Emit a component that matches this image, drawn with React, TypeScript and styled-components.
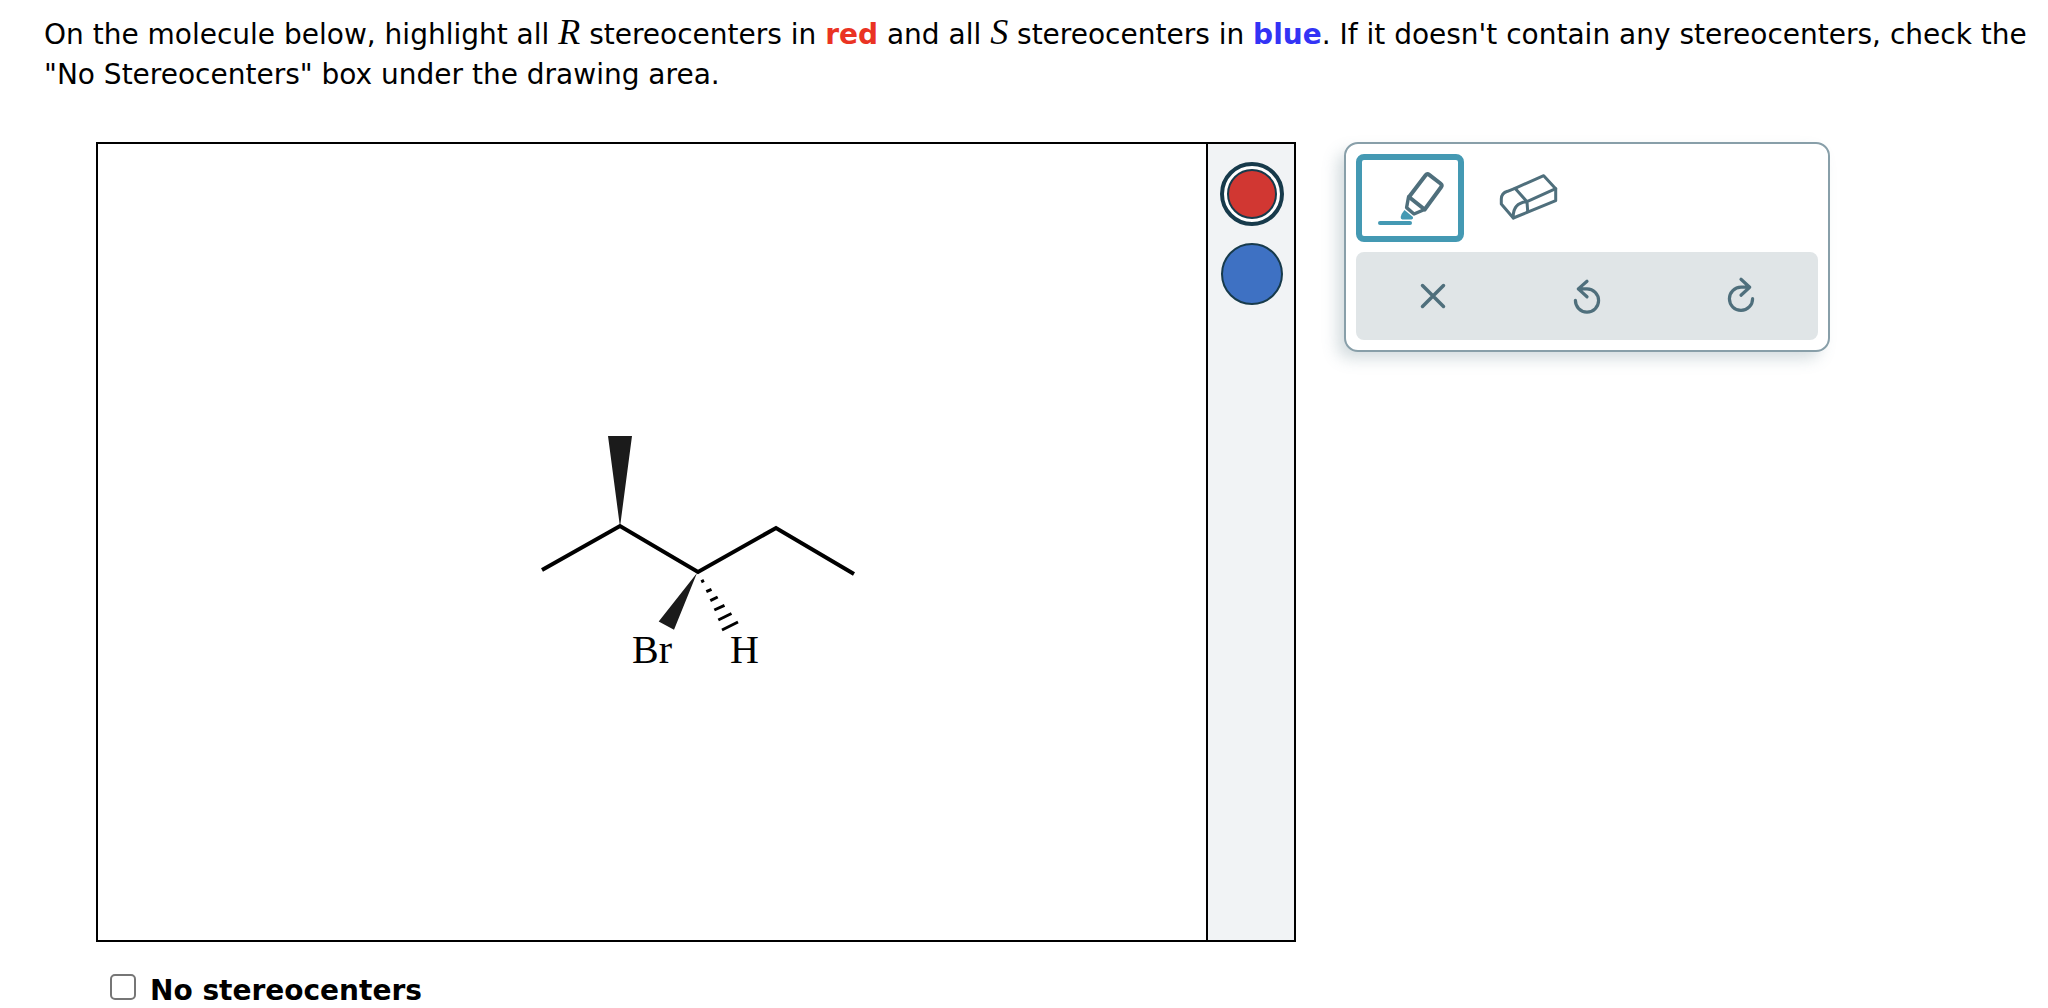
import React, { useState } from "react";
import styled, { createGlobalStyle } from "styled-components";

const colors = {
  ink: "#000000",
  slate: "#4f6f7c",
  teal: "#4499b3",
  navy: "#173a4b",
  frame: "#889fa9",
  bar: "#e0e5e7",
  rail: "#f1f3f5",
};

const GlobalStyle = createGlobalStyle`
  *, *::before, *::after { box-sizing: border-box; }
  body {
    margin: 0;
    background: #ffffff;
    color: ${colors.ink};
    font-family: Verdana, "DejaVu Sans", sans-serif;
    font-size: 28px;
    line-height: 40px;
  }
`;

const Page = styled.main`
  padding-top: 15px;
`;

const Prompt = styled.p`
  margin: 0;
  padding: 0 8px 0 44px;
`;

const Descriptor = styled.i`
  font-family: "Liberation Serif", serif;
  font-size: 36px;
  line-height: 0;
`;

const Emphasis = styled.b<{ $color: string }>`
  color: ${(p) => p.$color};
`;

const Workspace = styled.div`
  display: flex;
  align-items: flex-start;
  gap: 48px;
  padding: 47px 96px 0;
`;

const Board = styled.section`
  display: flex;
  flex: 0 1 1200px;
  border: 2px solid ${colors.ink};
`;

const Canvas = styled.svg`
  display: block;
  flex: 1;
  min-width: 0;
`;

const AtomLabel = styled.text`
  font-family: "Liberation Serif", serif;
  font-size: 40px;
`;

const Rail = styled.div`
  display: flex;
  flex: 0 0 88px;
  flex-direction: column;
  align-items: center;
  gap: 16px;
  padding: 18px 0 0 2px;
  border-left: 2px solid ${colors.ink};
  background: ${colors.rail};
`;

const Swatch = styled.button<{ $fill: string; $active: boolean }>`
  display: grid;
  place-items: center;
  width: 64px;
  height: 64px;
  padding: 0;
  border: ${(p) => (p.$active ? `4px solid ${colors.navy}` : "0")};
  border-radius: 50%;
  background: ${(p) => (p.$active ? "#ffffff" : "transparent")};
  cursor: pointer;

  &::before {
    content: "";
    width: ${(p) => (p.$active ? 50 : 62)}px;
    height: ${(p) => (p.$active ? 50 : 62)}px;
    border: 2px solid ${colors.navy};
    border-radius: 50%;
    background: ${(p) => p.$fill};
  }
`;

const Toolbox = styled.aside`
  display: flex;
  flex: 0 0 486px;
  flex-direction: column;
  gap: 10px;
  padding: 10px;
  border: 2px solid ${colors.frame};
  border-radius: 14px;
  background: #ffffff;
  box-shadow: -8px 8px 16px -2px rgba(79, 111, 124, 0.26);
`;

const ToolRow = styled.div`
  display: flex;
  gap: 12px;
`;

const Tool = styled.button<{ $active: boolean }>`
  width: 108px;
  height: 88px;
  padding: 0;
  border: 6px solid ${(p) => (p.$active ? colors.teal : "transparent")};
  border-radius: 8px;
  background: transparent;
  cursor: pointer;
`;

const ActionBar = styled.div`
  display: grid;
  grid-template-columns: repeat(3, 1fr);
  border-radius: 8px;
  background: ${colors.bar};
`;

const Action = styled.button`
  display: grid;
  place-items: center;
  height: 88px;
  padding: 0;
  border: 0;
  background: transparent;
  cursor: pointer;
`;

const Icon = styled.svg`
  display: block;
  fill: none;
  stroke: ${colors.slate};
  stroke-linecap: round;
  stroke-linejoin: round;
`;

const CheckLabel = styled.label`
  display: inline-flex;
  align-items: center;
  gap: 14px;
  margin: 29px 0 0 110px;
  font-weight: bold;
`;

const Checkbox = styled.input`
  appearance: none;
  width: 26px;
  height: 26px;
  margin: 0 0 8px;
  border: 2px solid #767676;
  border-radius: 5px;
  background: #ffffff;

  &:checked {
    background: ${colors.teal};
  }
`;

const Molecule = () => (
  <Canvas viewBox="0 0 1108 796" role="img" aria-label="Molecule drawing">
    <path d="M444 426 522 382 600 428 678 384 756 430" fill="none" stroke="#000" strokeWidth="4" />
    <path d="M510 292H534L522 383ZM599 429 560.700 477.600 576 485.700Z" fill="#1b1b1b" />
    <path
      d="M603.200 437.800 606 436.400M608.300 447.700 613.500 445.300M612.300 456.700 619.700 453M616.300 466 626.500 461.300M620.300 476 633.500 469.500M624 486 640 478"
      fill="none"
      stroke="#000"
      strokeWidth="3"
    />
    <AtomLabel x="534" y="519">Br</AtomLabel>
    <AtomLabel x="632" y="519">H</AtomLabel>
  </Canvas>
);

const HighlighterIcon = () => (
  <Icon viewBox="0 0 96 76" width="96" height="76" strokeWidth="3.400">
    <path
      strokeWidth="4"
      d="M47 37 63.600 15.300Q65.200 13.200 67.300 14.800L78.500 23.500Q80.600 25.200 79 27.300L62.700 49.500Z"
    />
    <path d="M46.500 37 44.600 47.600 52 54 62.500 49.500" />
    <path
      d="M42.500 50 51 57Q51.500 59.400 49.500 59.400H40.300Q38.500 59.200 38.700 57 39 54 42.500 50Z"
      fill={colors.teal}
      stroke="none"
    />
    <path d="M18 63H48" stroke={colors.teal} strokeWidth="4" />
  </Icon>
);

const EraserIcon = () => (
  <Icon viewBox="0 0 96 76" width="96" height="76" strokeWidth="3">
    <path d="M61.700 15.700 73.700 28.700V40.700L31.300 58 19.300 44V39Q19.500 33 25.500 31.300L33 28.300Z" />
    <path d="M33 28.300 45 41.700 73.700 28.700M45 41.700 45.700 51.700M31.300 58Q30.500 43 45 41.700" />
  </Icon>
);

const ClearIcon = () => (
  <Icon viewBox="0 0 48 48" width="48" height="48" strokeWidth="3.500">
    <path d="M13.500 13.500 34.500 34.500M34.500 13.500 13.500 34.500" />
  </Icon>
);

const UndoIcon = () => (
  <Icon viewBox="0 0 48 48" width="48" height="48" strokeWidth="3.200">
    <path d="M12.400 28.300A11.600 11.600 0 1 0 24 16.900H15.300M24 9.200 15.300 16.900 24 24.800" />
  </Icon>
);

const RedoIcon = () => (
  <Icon viewBox="0 0 48 48" width="48" height="48" strokeWidth="3.200">
    <path d="M35.600 26.700A11.600 11.600 0 1 1 24 15.200H32.700M24 7.300 32.700 15.200 24 23.200" />
  </Icon>
);

const swatches = [
  { name: "red", fill: "#d13732" },
  { name: "blue", fill: "#3e71c3" },
];

const tools = [
  { name: "Highlight", Glyph: HighlighterIcon },
  { name: "Erase", Glyph: EraserIcon },
];

const actions = [
  { name: "Clear", Glyph: ClearIcon },
  { name: "Undo", Glyph: UndoIcon },
  { name: "Redo", Glyph: RedoIcon },
];

export default function App() {
  const [color, setColor] = useState("red");
  const [tool, setTool] = useState("Highlight");

  return (
    <>
      <GlobalStyle />
      <Page>
        <Prompt>
          On the molecule below, highlight all <Descriptor>R</Descriptor> stereocenters in{" "}
          <Emphasis $color="#ea3323">red</Emphasis> and all <Descriptor>S</Descriptor> stereocenters in{" "}
          <Emphasis $color="#3333f5">blue</Emphasis>. If it doesn't contain any stereocenters, check the{" "}
          <br />
          "No Stereocenters" box under the drawing area.
        </Prompt>
        <Workspace>
          <Board>
            <Molecule />
            <Rail>
              {swatches.map((s) => (
                <Swatch
                  key={s.name}
                  type="button"
                  aria-label={s.name}
                  aria-pressed={color === s.name}
                  $fill={s.fill}
                  $active={color === s.name}
                  onClick={() => setColor(s.name)}
                />
              ))}
            </Rail>
          </Board>
          <Toolbox>
            <ToolRow>
              {tools.map(({ name, Glyph }) => (
                <Tool
                  key={name}
                  type="button"
                  aria-label={name}
                  aria-pressed={tool === name}
                  $active={tool === name}
                  onClick={() => setTool(name)}
                >
                  <Glyph />
                </Tool>
              ))}
            </ToolRow>
            <ActionBar>
              {actions.map(({ name, Glyph }) => (
                <Action key={name} type="button" aria-label={name}>
                  <Glyph />
                </Action>
              ))}
            </ActionBar>
          </Toolbox>
        </Workspace>
        <CheckLabel htmlFor="no-stereocenters">
          <Checkbox id="no-stereocenters" type="checkbox" />
          No stereocenters
        </CheckLabel>
      </Page>
    </>
  );
}
